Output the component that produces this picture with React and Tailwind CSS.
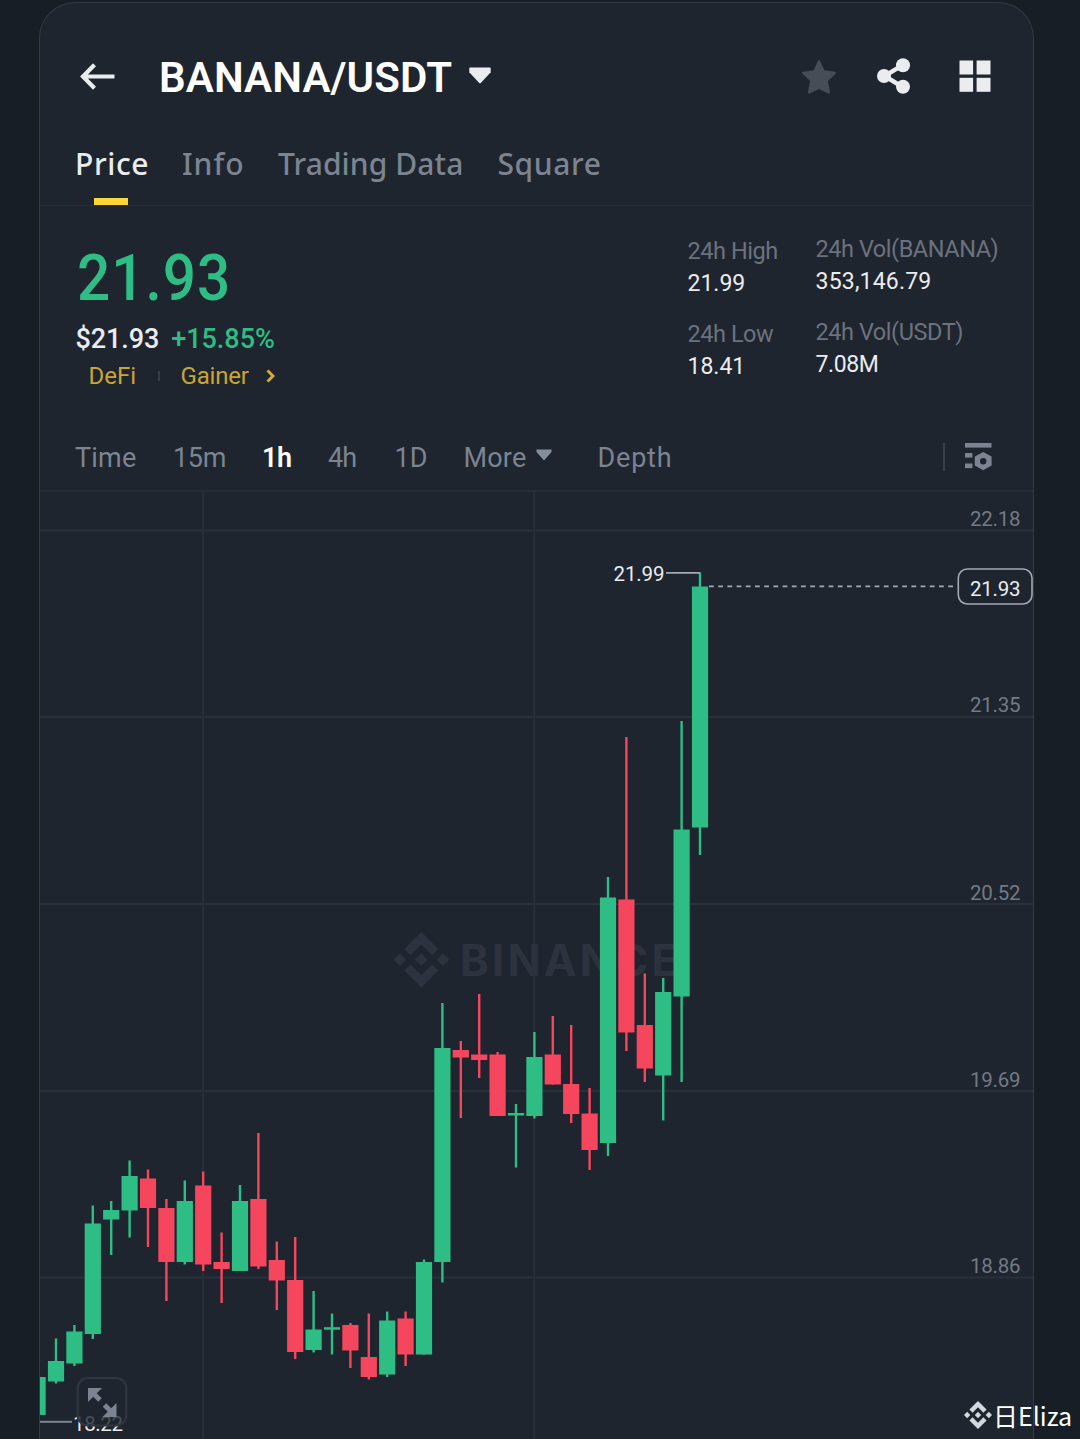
const UP = "#2ebd85";
const DOWN = "#f6465d";
const GRID = "#28303a";

const tabs = [
  { name: "Price", width: "w-[107px]", tracking: "tracking-[0.6px]" },
  { name: "Info", width: "w-[96px]", tracking: "tracking-[1px]" },
  { name: "Trading Data", width: "w-[219.5px]", tracking: "tracking-[0.1px]" },
  { name: "Square", width: "w-[110px]", tracking: "tracking-[0.6px]" },
];

const stats = [
  {
    className: "w-[128px] pt-[29px]",
    items: [
      { label: "24h High", value: "21.99", tracking: "" },
      { label: "24h Low", value: "18.41", tracking: "" },
    ],
  },
  {
    className: "w-[190px] pt-[27px]",
    items: [
      { label: "24h Vol(BANANA)", value: "353,146.79", tracking: "tracking-[0.2px]" },
      { label: "24h Vol(USDT)", value: "7.08M", tracking: "tracking-[-0.4px]" },
    ],
  },
];

const intervals = [
  { name: "Time", className: "w-[98px] tracking-[0.2px]" },
  { name: "15m", className: "w-[89px] tracking-[-0.3px]" },
  { name: "1h", className: "w-[66px] font-semibold text-white tracking-[-0.4px]" },
  { name: "4h", className: "w-[66.5px] tracking-[-0.8px]" },
  { name: "1D", className: "w-[69px]" },
  { name: "More", className: "w-[72px] tracking-[0.2px]" },
];

const priceLabels = [
  { text: "22.18", y: 525.5 },
  { text: "21.35", y: 712 },
  { text: "20.52", y: 899.5 },
  { text: "19.69", y: 1086.5 },
  { text: "18.86", y: 1273 },
];

// [x, high, bodyTop, bodyBottom, low, rising]
const candles = [
  [37.6, 1377, 1377, 1415, 1415, true],
  [56, 1338.5, 1361, 1381.5, 1383.5, true],
  [74.4, 1325, 1331.5, 1363.5, 1366, true],
  [92.8, 1205.5, 1223.5, 1334, 1339, true],
  [111.2, 1201, 1210, 1219.5, 1255, true],
  [129.6, 1160.5, 1176, 1210.5, 1237.5, true],
  [148, 1169.5, 1178.5, 1208, 1247, false],
  [166.4, 1199, 1208, 1262, 1301, false],
  [184.8, 1180.5, 1201, 1262, 1264.5, true],
  [203.2, 1171.5, 1185.5, 1264.5, 1271, false],
  [221.6, 1232.5, 1262, 1269, 1303, false],
  [240, 1185, 1201, 1271, 1271, true],
  [258.4, 1133, 1199, 1266.5, 1269, false],
  [276.8, 1241.5, 1260, 1280.5, 1310, false],
  [295.2, 1237, 1280, 1352, 1359, false],
  [313.6, 1291, 1329.5, 1350, 1352.5, true],
  [332, 1313.5, 1327.2, 1329.7, 1354.5, true],
  [350.4, 1323, 1325, 1350.5, 1368, false],
  [368.8, 1313.5, 1357, 1377, 1379.5, false],
  [387.2, 1311.5, 1320.5, 1374.5, 1377, true],
  [405.6, 1311.5, 1318.5, 1354.5, 1366, false],
  [424, 1259.5, 1262, 1354.5, 1354.5, true],
  [442.4, 1003, 1048, 1262, 1282.5, true],
  [460.8, 1041, 1050, 1057.5, 1118, false],
  [479.2, 994, 1054.5, 1060, 1078, false],
  [497.6, 1052, 1054.5, 1116, 1116, false],
  [516, 1104, 1113, 1115.5, 1167.5, true],
  [534.4, 1032, 1057, 1116, 1118.5, true],
  [552.8, 1016, 1054.5, 1084.5, 1084.5, false],
  [571.2, 1025, 1084, 1114, 1123, false],
  [589.6, 1088, 1113.5, 1150, 1170, false],
  [608, 877, 897.5, 1143, 1156, true],
  [626.4, 737, 899.5, 1032.5, 1051, false],
  [644.8, 973.5, 1025, 1068.5, 1082, false],
  [663.2, 978, 992, 1075.5, 1120.5, true],
  [681.6, 721, 829.5, 996.5, 1082, true],
  [700, 572.5, 586.5, 827.5, 855, true],
];

const BinancePath = () => (
  <path d="M16.624 13.9202l2.7175 2.7154-7.353 7.353-7.353-7.352 2.7175-2.7164 4.6355 4.6595 4.6356-4.6595zm4.6366-4.6366L24 12l-2.7154 2.7164L18.5682 12l2.6924-2.7164zm-9.272.001l2.7163 2.6914-2.7164 2.7174v-.001L9.2721 12l2.7164-2.7154zm-9.2722-.001L5.4088 12l-2.6914 2.6924L0 12l2.7164-2.7164zM11.9885.0115l7.353 7.329-2.7174 2.7154-4.6356-4.6356-4.6355 4.6595-2.7174-2.7154 7.353-7.353z" />
);

const Header = () => (
  <div className="flex h-[134px] items-center pt-[14px] pl-[40px]">
    <svg className="h-[28px] w-[35px]" viewBox="0 0 35 28" fill="none" stroke="#eaecef" strokeWidth="4.2">
      <path d="M3 13.5H34.5M14.5 1.8L3 13.5L14.5 25.2" />
    </svg>
    <h1 className="mt-[2px] ml-[44px] w-[310px] text-[42px] leading-[60px] font-semibold tracking-[0.1px] text-white">
      BANANA/USDT
    </h1>
    <svg className="mb-[3px] h-[17px] w-[22px]" viewBox="0 0 22 17" fill="#eaecef">
      <path d="M1.2 0.5H20.8Q21.7 0.5 21.7 1.4V5.2L12 15.8Q11 16.8 10 15.8L0.3 5.2V1.4Q0.3 0.5 1.2 0.5Z" />
    </svg>
    <svg className="ml-[310px] h-[36px] w-[36px]" viewBox="0 0 36 36" fill="#474d57" stroke="#474d57" strokeWidth="2.4" strokeLinejoin="round">
      <path d="M18 2.4L22.7 12.5L33.8 13.9L25.6 21.6L27.9 33.4L18 28.6L8.1 33.4L10.4 21.6L2.2 13.9L13.3 12.5Z" />
    </svg>
    <svg className="mb-[2px] ml-[39px] h-[36px] w-[36px]" viewBox="0 0 36 36" fill="#eaecef">
      <path d="M26.6 7.2L8.5 18L26.6 29" fill="none" stroke="#eaecef" strokeWidth="4.4" />
      <circle cx="8" cy="18" r="7" />
      <circle cx="27" cy="7.2" r="7" />
      <circle cx="27" cy="28.8" r="7" />
    </svg>
    <svg className="mb-[2px] ml-[47px] h-[32px] w-[32px]" viewBox="0 0 32 32" fill="#eaecef">
      <rect x="0.5" y="0.5" width="13.6" height="14" />
      <rect x="17.6" y="0.5" width="13.9" height="14" />
      <rect x="0.5" y="17.8" width="13.6" height="14" />
      <rect x="17.6" y="17.8" width="13.9" height="14" />
    </svg>
  </div>
);

const Tabs = () => (
  <div className="flex h-[69px] border-b border-[#272e39] pl-[35px] font-['Noto_Sans',sans-serif] text-[30px] font-medium text-[#7c8491]">
    {tabs.map((tab, i) => (
      <div key={tab.name} className={`${tab.width} ${tab.tracking} whitespace-nowrap`}>
        <div className={`leading-[54px] ${i === 0 ? "text-[#eaecef]" : ""}`}>{tab.name}</div>
        {i === 0 && <div className="mt-[6.5px] ml-[19px] h-[7px] w-[34px] bg-[#fcd535]" />}
      </div>
    ))}
  </div>
);

const Ticker = () => (
  <div className="flex h-[214px] pl-[36.5px]">
    <div className="w-[611px] pt-[41.5px]">
      <div className="origin-left scale-x-[.9] text-[65px] leading-[60px] font-medium tracking-[1.1px] text-[#2ebd85]">
        21.93
      </div>
      <div className="mt-[15.5px] flex gap-[12px] text-[27px] leading-[32px] font-medium">
        <span className="-ml-px tracking-[-0.1px] text-[#eaecef]">$21.93</span>
        <span className="text-[#2ebd85]">+15.85%</span>
      </div>
      <div className="mt-[5.5px] flex items-center pl-[12px] text-[24px] leading-[30px] text-[#c9a534]">
        <span className="w-[69px]">DeFi</span>
        <span className="h-[10px] w-[2px] bg-[#373f4b]" />
        <span className="ml-[21px] w-[85px] tracking-[-0.2px]">Gainer</span>
        <svg className="h-[14px] w-[10px]" viewBox="0 0 10 14" fill="none" stroke="#d8b030" strokeWidth="2.8">
          <path d="M1.5 1.5L7 7L1.5 12.5" />
        </svg>
      </div>
    </div>
    {stats.map((column, i) => (
      <div key={i} className={column.className}>
        {column.items.map((item) => (
          <div key={item.label} className="mb-[18px] whitespace-nowrap">
            <div className="text-[23.5px] leading-[32px] tracking-[-0.45px] text-[#6b727e]">{item.label}</div>
            <div className={`text-[23px] leading-[33px] text-[#eaecef] ${item.tracking}`}>{item.value}</div>
          </div>
        ))}
      </div>
    ))}
  </div>
);

const Intervals = () => (
  <div className="flex h-[70px] items-center pt-[5px] pl-[35px] text-[27px] leading-[34px] text-[#7c8491]">
    {intervals.map((item) => (
      <span key={item.name} className={`pt-px ${item.className}`}>{item.name}</span>
    ))}
    <svg className="mb-[6px] h-[12px] w-[16px]" viewBox="0 0 16 12" fill="#848e9c">
      <path d="M0.5 0.5H15.5V3L8 11.5L0.5 3Z" />
    </svg>
    <span className="ml-[46px] w-[345px] pt-px tracking-[0.8px]">Depth</span>
    <span className="mb-[2px] h-[28px] w-[2px] bg-[#373f4b]" />
    <svg className="mb-[2px] ml-[19px] h-[30px] w-[30px]" viewBox="0 0 30 30" fill="#7c8491">
      <rect x="1" y="1" width="26.5" height="4.6" />
      <rect x="1" y="11" width="7.4" height="4.6" />
      <rect x="1" y="21.5" width="7.4" height="4.6" />
      <path fillRule="evenodd" d="M19.2 10L27.6 14.6V23.6L19.2 28.3L10.8 23.6V14.6ZM19.2 16A3.2 3.2 0 1 0 19.2 22.4A3.2 3.2 0 1 0 19.2 16Z" />
    </svg>
  </div>
);

const Chart = () => (
  <svg className="block h-[947px] w-[993px]" viewBox="40 492 993 947" fontFamily="Roboto, sans-serif" fontSize="20.5">
    {/* Grid */}
    {[530.5, 717, 904, 1091, 1277.5].map((y) => (
      <line key={y} x1="40" x2="1033" y1={y} y2={y} stroke={GRID} strokeWidth="1.8" />
    ))}
    {[203, 534.3].map((x) => (
      <line key={x} x1={x} x2={x} y1="490" y2="1439" stroke={GRID} strokeWidth="1.8" />
    ))}

    {/* Watermark */}
    <g fill="#2c333e">
      <g transform="translate(393.5 932) scale(2.32)">
        <BinancePath />
      </g>
      <text x="460" y="975.5" fontFamily="Inter, sans-serif" fontSize="43.5" fontWeight="700" textLength="218" lengthAdjust="spacing">
        BINANCE
      </text>
    </g>

    {/* Candles */}
    {candles.map(([x, high, top, bottom, low, rising]) => (
      <g key={x} fill={rising ? UP : DOWN}>
        <rect x={x - 1.2} y={high} width="2.4" height={low - high} />
        <rect x={x - 8.1} y={top} width="16.2" height={bottom - top} />
      </g>
    ))}

    {/* Axis prices */}
    {priceLabels.map((label) => (
      <text key={label.text} x="970" y={label.y} fill="#727a86" textLength="50.5">{label.text}</text>
    ))}

    {/* High of the visible range */}
    <text x="613.5" y="581" fill="#eaecef" textLength="51">21.99</text>
    <path d="M666 572.8H700" stroke="#a3a9b3" strokeWidth="1.8" />

    {/* Last price */}
    <path d="M709 586.3H957" stroke="#a3a9b3" strokeWidth="1.8" strokeDasharray="4.8 4.4" />
    <rect x="958.3" y="569" width="73.7" height="35" rx="9" fill="#1e252e" stroke="#a3a9b3" strokeWidth="1.6" />
    <text x="970" y="596" fill="#eaecef" textLength="50.5">21.93</text>

    {/* Low of the visible range, partly under the expand button */}
    <path d="M40 1421.8H72" stroke="#7f8692" strokeWidth="2" />
    <text x="73" y="1430.5" fill="#eaecef" textLength="50">18.22</text>
    <rect x="77.7" y="1378" width="48.5" height="47.5" rx="10" fill="#1e252e" fillOpacity="0.8" stroke="#2f3641" strokeWidth="2.2" />
    <g fill="#7c8491" stroke="#7c8491">
      <path d="M88 1388H102L88 1402Z" stroke="none" />
      <path d="M92 1392L100 1400" strokeWidth="5" />
      <path d="M116.5 1417H102.5L116.5 1403Z" stroke="none" />
      <path d="M112.5 1413L104.5 1405" strokeWidth="5" />
    </g>
  </svg>
);

const App = () => {
  return (
    <div className="relative h-[1439px] w-[1080px] overflow-hidden bg-[#181e25] pt-[2px] pl-[39px] font-['Roboto',sans-serif]">
      <div className="h-[1437px] w-[995px] overflow-hidden rounded-t-[36px] border border-b-0 border-[#333a45] bg-[#1e252e]">
        <Header />
        <Tabs />
        <Ticker />
        <Intervals />
        <div className="border-t-2 border-[#272e39]">
          <Chart />
        </div>
      </div>

      {/* Author tag */}
      <div className="absolute top-[1397.5px] left-[964px] flex items-center text-white">
        <svg className="h-[28px] w-[28px]" viewBox="0 0 24 24" fill="#d3d7de">
          <BinancePath />
        </svg>
        <span className="ml-px font-['Noto_Sans_CJK_SC',sans-serif] text-[25px] leading-[34px]">日Eliza</span>
      </div>
    </div>
  );
};

export default App;
